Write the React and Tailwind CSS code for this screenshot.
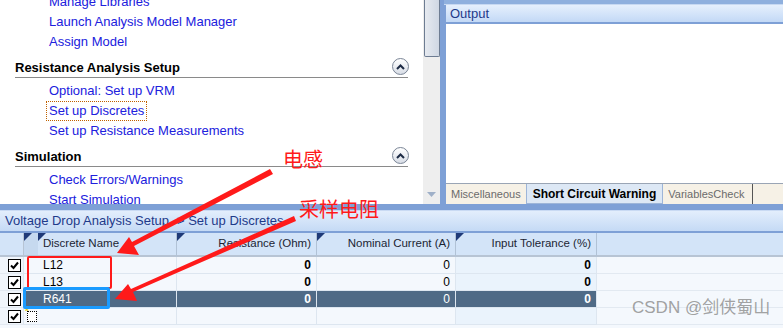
import React from "react";

const font = { fontFamily: '"Liberation Sans", Arial, sans-serif' };

// -----------------------
// LEFT TASK PANEL
// -----------------------
const Link = ({ children, focus }) => (
  <div className="h-5 flex items-center pl-[49px]">
    <span
      className={`text-[13px] leading-[18px] text-[#2020dd] ${
        focus ? "outline outline-1 outline-dotted outline-[#c06000] -ml-[2px] px-[2px]" : ""
      }`}
    >
      {children}
    </span>
  </div>
);

const Section = ({ title }) => (
  <div className="mx-[15px] h-[26px] flex items-end justify-between border-b border-[#8a8a8a] pb-[3px]">
    <span className="text-[13px] font-bold text-black leading-none">{title}</span>
    <span className="w-[17px] h-[17px] rounded-full border border-[#7a8596] bg-gradient-to-b from-white to-[#d8dde6] flex items-center justify-center mr-[-1px] mb-[-1px]">
      <svg width="9" height="6" viewBox="0 0 9 6">
        <path d="M1 5 L4.5 1.5 L8 5" stroke="#1c2a44" strokeWidth="2" fill="none" />
      </svg>
    </span>
  </div>
);

const Checkbox = () => (
  <span className="w-[13px] h-[13px] border border-black bg-white flex items-center justify-center">
    <svg width="11" height="11" viewBox="0 0 11 11">
      <path d="M2 5.5 L4.5 8 L9 2.5" stroke="black" strokeWidth="2" fill="none" />
    </svg>
  </span>
);

const Tri = () => (
  <span className="absolute left-0 top-0 w-0 h-0 border-t-[8px] border-t-[#1f3a78] border-r-[8px] border-r-transparent" />
);

const rows = [
  { name: "L12" },
  { name: "L13" },
  { name: "R641", sel: true },
];

export default function App() {
  return (
    <div className="relative w-[783px] h-[328px] overflow-hidden bg-white flex flex-col" style={font}>
      {/* TOP AREA */}
      <div className="h-[204px] flex">
        <div className="w-[423px] bg-white">
          <div className="-mt-[8px]">
            <Link>Manage Libraries</Link>
            <Link>Launch Analysis Model Manager</Link>
            <Link>Assign Model</Link>
            <Section title="Resistance Analysis Setup" />
            <div className="h-[3px]" />
            <Link>Optional: Set up VRM</Link>
            <Link focus>Set up Discretes</Link>
            <Link>Set up Resistance Measurements</Link>
            <Section title="Simulation" />
            <div className="h-[3px]" />
            <Link>Check Errors/Warnings</Link>
            <Link>Start Simulation</Link>
          </div>
        </div>

        {/* SCROLLBAR */}
        <div className="w-[17px] bg-[#eeeeee] flex flex-col justify-between items-center">
          <div className="w-[16px] h-[57px] ml-[1px] rounded-b-[2px] border border-t-0 border-[#6d7c92] bg-gradient-to-r from-[#e6eaf0] to-[#cfd7e3]" />
          <svg width="9" height="6" viewBox="0 0 9 6" className="mb-[6px]">
            <path d="M0 0 H9 L4.5 5 Z" fill="#9fb0c8" />
          </svg>
        </div>

        <div className="w-[4px] bg-[#7ea0d6]" />

        {/* OUTPUT PANEL */}
        <div className="flex-1 flex flex-col bg-[#7ea0d6]">
          <div className="h-[4px] bg-[#8fb0de]" />
          <div className="h-[1px] bg-[#c7d9f2]" />
          <div className="h-[19px] ml-[2px] bg-gradient-to-b from-[#e6f0fd] to-[#c3d9f6] border-b-2 border-[#7ea0d6] flex items-center pl-[4px]">
            <span className="text-[13px] text-[#1e3a8a]">Output</span>
          </div>
          <div className="flex-1 ml-[2px] bg-white border-b border-[#9aa5b5]" />
          <div className="h-[20px] ml-[2px] bg-[#f6f1e6] flex items-end">
            <span className="pl-[5px] pr-[5px] h-[20px] flex items-center text-[11px] text-[#6b6b6b]">Miscellaneous</span>
            <span className="px-[6px] h-[20px] flex items-center text-[12px] font-bold text-black bg-[#dde8f5] border border-t-0 border-[#9db5d8]">
              Short Circuit Warning
            </span>
            <span className="pl-[5px] pr-[7px] h-[20px] flex items-center text-[11px] text-[#6b6b6b] border-r border-[#555]">
              VariablesCheck
            </span>
          </div>
        </div>
      </div>

      {/* SPLITTER */}
      <div className="h-[6px] bg-[#7ea0d6]" />
      <div className="h-[1px] bg-[#c9daf3]" />

      {/* BOTTOM PANEL */}
      <div className="flex-1 flex flex-col bg-[#f4f8fd]">
        <div className="h-[22px] bg-gradient-to-b from-[#e3eefc] to-[#c5daf5] flex items-center pl-[5px] border-b-2 border-[#7ea0d6]">
          <span className="text-[13px] text-[#1e3a8a]">Voltage Drop Analysis Setup -&gt; Set up Discretes</span>
        </div>

        <div className="grid grid-cols-[23px_15px_139px_140px_139px_141px_1fr] text-[11.5px] text-[#1b2433]">
          {/* HEADER */}
          <div className="h-[24px] bg-[#d3e4f8] border-b-2 border-[#b7c4d4]" />
          <div className="h-[24px] bg-[#c6d9ef] border-b-2 border-[#b7c4d4] border-l border-[#b4c6dc] relative">
            <Tri />
          </div>
          <div className="h-[24px] bg-[#d3e4f8] border-b-2 border-[#b7c4d4] relative flex items-center pl-[5px] border-r border-r-[#b1c2d6]">
            <Tri />
            Discrete Name
          </div>
          <div className="h-[24px] bg-[#d3e4f8] border-b-2 border-[#b7c4d4] relative flex items-center justify-end pr-[5px] border-r border-r-[#b1c2d6]">
            <Tri />
            Resistance (Ohm)
          </div>
          <div className="h-[24px] bg-[#d3e4f8] border-b-2 border-[#b7c4d4] relative flex items-center justify-end pr-[5px] border-r border-r-[#b1c2d6]">
            <Tri />
            Nominal Current (A)
          </div>
          <div className="h-[24px] bg-[#d3e4f8] border-b-2 border-[#b7c4d4] relative flex items-center justify-end pr-[5px] border-r border-r-[#b1c2d6]">
            <Tri />
            Input Tolerance (%)
          </div>
          <div className="h-[24px] bg-[#d3e4f8] border-b-2 border-[#b7c4d4]" />

          {/* ROWS */}
          {rows.map((r) => (
            <React.Fragment key={r.name}>
              <div className="h-[17px] bg-[#f0f5fb] flex items-center justify-end pr-[2px] border-b border-[#e2e9f1]">
                <Checkbox />
              </div>
              <div className={`h-[17px] border-b border-l border-[#dde6f0] ${r.sel ? "bg-[#4f6a86]" : "bg-[#f4f8fd]"}`} />
              <div className={`h-[17px] flex items-center pl-[5px] text-[12px] border-b border-r border-[#dde6f0] ${r.sel ? "bg-[#4f6a86] text-white" : "bg-[#f4f8fd] text-black"}`}>
                {r.name}
              </div>
              <div className={`h-[17px] flex items-center justify-end pr-[5px] text-[12px] font-bold border-b border-r border-[#dde6f0] ${r.sel ? "bg-[#4f6a86] text-white" : "bg-[#f4f8fd] text-black"}`}>
                0
              </div>
              <div className={`h-[17px] flex items-center justify-end pr-[5px] text-[12px] border-b border-r border-[#dde6f0] ${r.sel ? "bg-[#4f6a86] text-white" : "bg-[#f4f8fd] text-black"}`}>
                0
              </div>
              <div className={`h-[17px] flex items-center justify-end pr-[5px] text-[12px] font-bold border-b border-r border-[#dde6f0] ${r.sel ? "bg-[#4f6a86] text-white" : "bg-[#eaf3fc] text-black"}`}>
                0
              </div>
              <div className="h-[17px] bg-[#f4f8fd] border-b border-[#e2e9f1]" />
            </React.Fragment>
          ))}

          {/* NEW ROW */}
          <div className="h-[17px] bg-[#f0f5fb] flex items-center justify-end pr-[2px] border-b border-[#e2e9f1]">
            <Checkbox />
          </div>
          <div className="h-[17px] border-b border-l border-[#dde6f0] bg-[#f4f8fd] relative">
            <span className="absolute left-[3px] top-[3px] w-[10px] h-[11px] border border-dotted border-black bg-white" />
            <span className="absolute left-[1px] top-[-1px] text-[10px] leading-none text-[#e8d000] font-bold">*</span>
          </div>
          <div className="h-[17px] bg-[#f4f8fd] border-b border-r border-[#dde6f0]" />
          <div className="h-[17px] bg-[#f4f8fd] border-b border-r border-[#dde6f0]" />
          <div className="h-[17px] bg-[#f4f8fd] border-b border-r border-[#dde6f0]" />
          <div className="h-[17px] bg-[#eaf3fc] border-b border-r border-[#dde6f0]" />
          <div className="h-[17px] bg-[#f4f8fd] border-b border-[#e2e9f1]" />
        </div>
      </div>

      {/* ANNOTATIONS */}
      <div className="absolute left-[27px] top-[256px] w-[85px] h-[33px] border-2 border-[#ff1a1a] rounded-[2px]" />
      <div className="absolute left-[23px] top-[287px] w-[87px] h-[22px] border-[3px] border-[#1a9bff] rounded-[2px]" />
      <span
        className="absolute left-[283px] top-[149px] text-[20px] leading-none text-[#ff1a1a]"
        style={{ fontFamily: '"Noto Sans CJK SC", sans-serif' }}
      >
        电感
      </span>
      <span
        className="absolute left-[299px] top-[199px] text-[20px] leading-none text-[#ff1a1a]"
        style={{ fontFamily: '"Noto Sans CJK SC", sans-serif' }}
      >
        采样电阻
      </span>
      <svg className="absolute left-0 top-0" width="783" height="328">
        <polygon points="270,169 273,174 134,246 139,255 117,253 129,237 132,242" fill="#ff1a1a" />
        <polygon points="294,216 296,221 133,292 137,301 115,299 128,284 131,289" fill="#ff1a1a" />
      </svg>
      <span
        className="absolute left-[632px] top-[299px] text-[17px] leading-none text-[#8a8a8a]/80"
        style={{ fontFamily: '"Liberation Sans", "Noto Sans CJK SC", sans-serif' }}
      >
        CSDN @剑侠蜀山
      </span>
    </div>
  );
}
